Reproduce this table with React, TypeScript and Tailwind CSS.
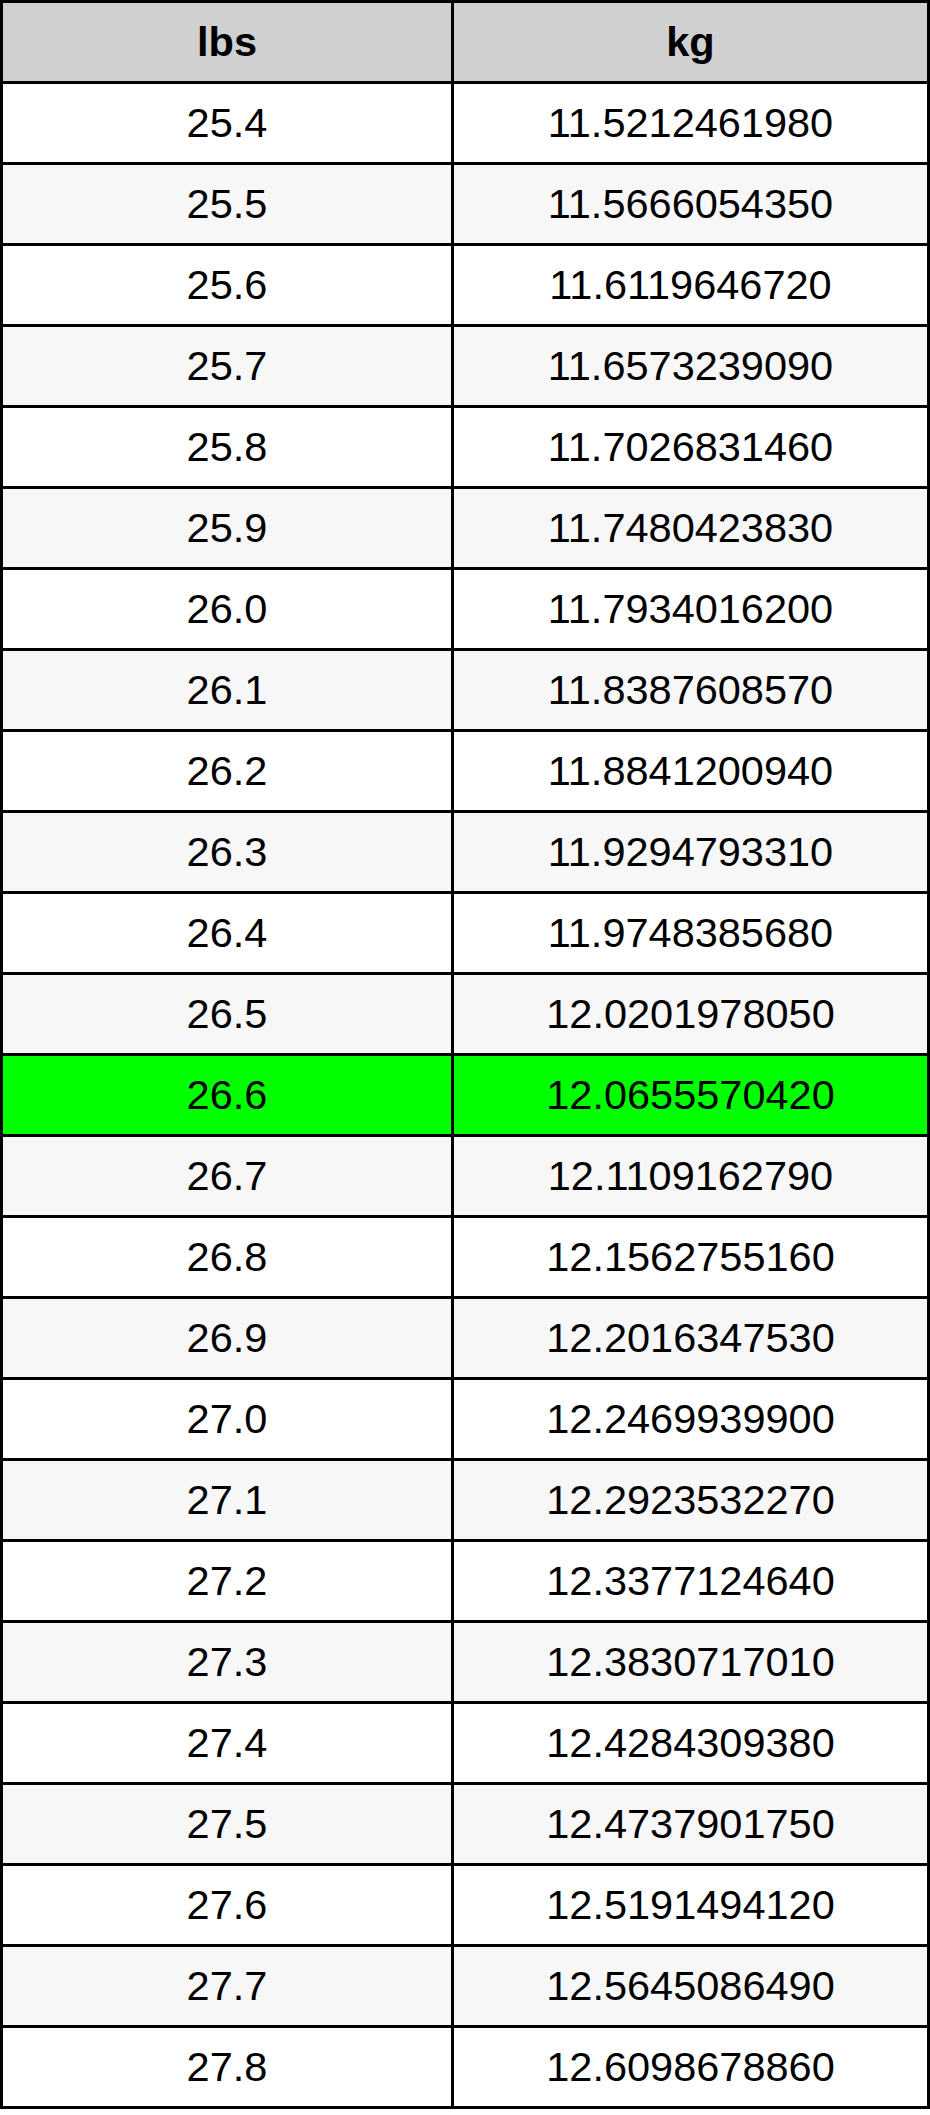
import React from 'react'

const rows: [string, string][] = [
  ['25.4', '11.5212461980'],
  ['25.5', '11.5666054350'],
  ['25.6', '11.6119646720'],
  ['25.7', '11.6573239090'],
  ['25.8', '11.7026831460'],
  ['25.9', '11.7480423830'],
  ['26.0', '11.7934016200'],
  ['26.1', '11.8387608570'],
  ['26.2', '11.8841200940'],
  ['26.3', '11.9294793310'],
  ['26.4', '11.9748385680'],
  ['26.5', '12.0201978050'],
  ['26.6', '12.0655570420'],
  ['26.7', '12.1109162790'],
  ['26.8', '12.1562755160'],
  ['26.9', '12.2016347530'],
  ['27.0', '12.2469939900'],
  ['27.1', '12.2923532270'],
  ['27.2', '12.3377124640'],
  ['27.3', '12.3830717010'],
  ['27.4', '12.4284309380'],
  ['27.5', '12.4737901750'],
  ['27.6', '12.5191494120'],
  ['27.7', '12.5645086490'],
  ['27.8', '12.6098678860'],
]

const HIGHLIGHT = '26.6'

export default function App() {
  return (
    <div className="w-[930px] bg-white font-['Liberation_Sans',Arial,sans-serif] text-black">
      <div className="grid grid-cols-[448px_1fr] gap-[3px] bg-black p-[3px]">
        {/* header */}
        <div className="flex h-[78px] items-center justify-center bg-[#d0d0d0] text-[41.5px] font-bold">lbs</div>
        <div className="flex h-[78px] items-center justify-center bg-[#d0d0d0] text-[41.5px] font-bold">kg</div>

        {rows.map(([lbs, kg], i) => {
          const bg = lbs === HIGHLIGHT ? 'bg-[#00ff00]' : i % 2 === 0 ? 'bg-white' : 'bg-[#f7f7f7]'
          return (
            <React.Fragment key={lbs}>
              <div className={`flex h-[78px] items-center justify-center text-[41.5px] ${bg}`}>{lbs}</div>
              <div className={`flex h-[78px] items-center justify-center text-[41.5px] ${bg}`}>{kg}</div>
            </React.Fragment>
          )
        })}
      </div>
    </div>
  )
}
